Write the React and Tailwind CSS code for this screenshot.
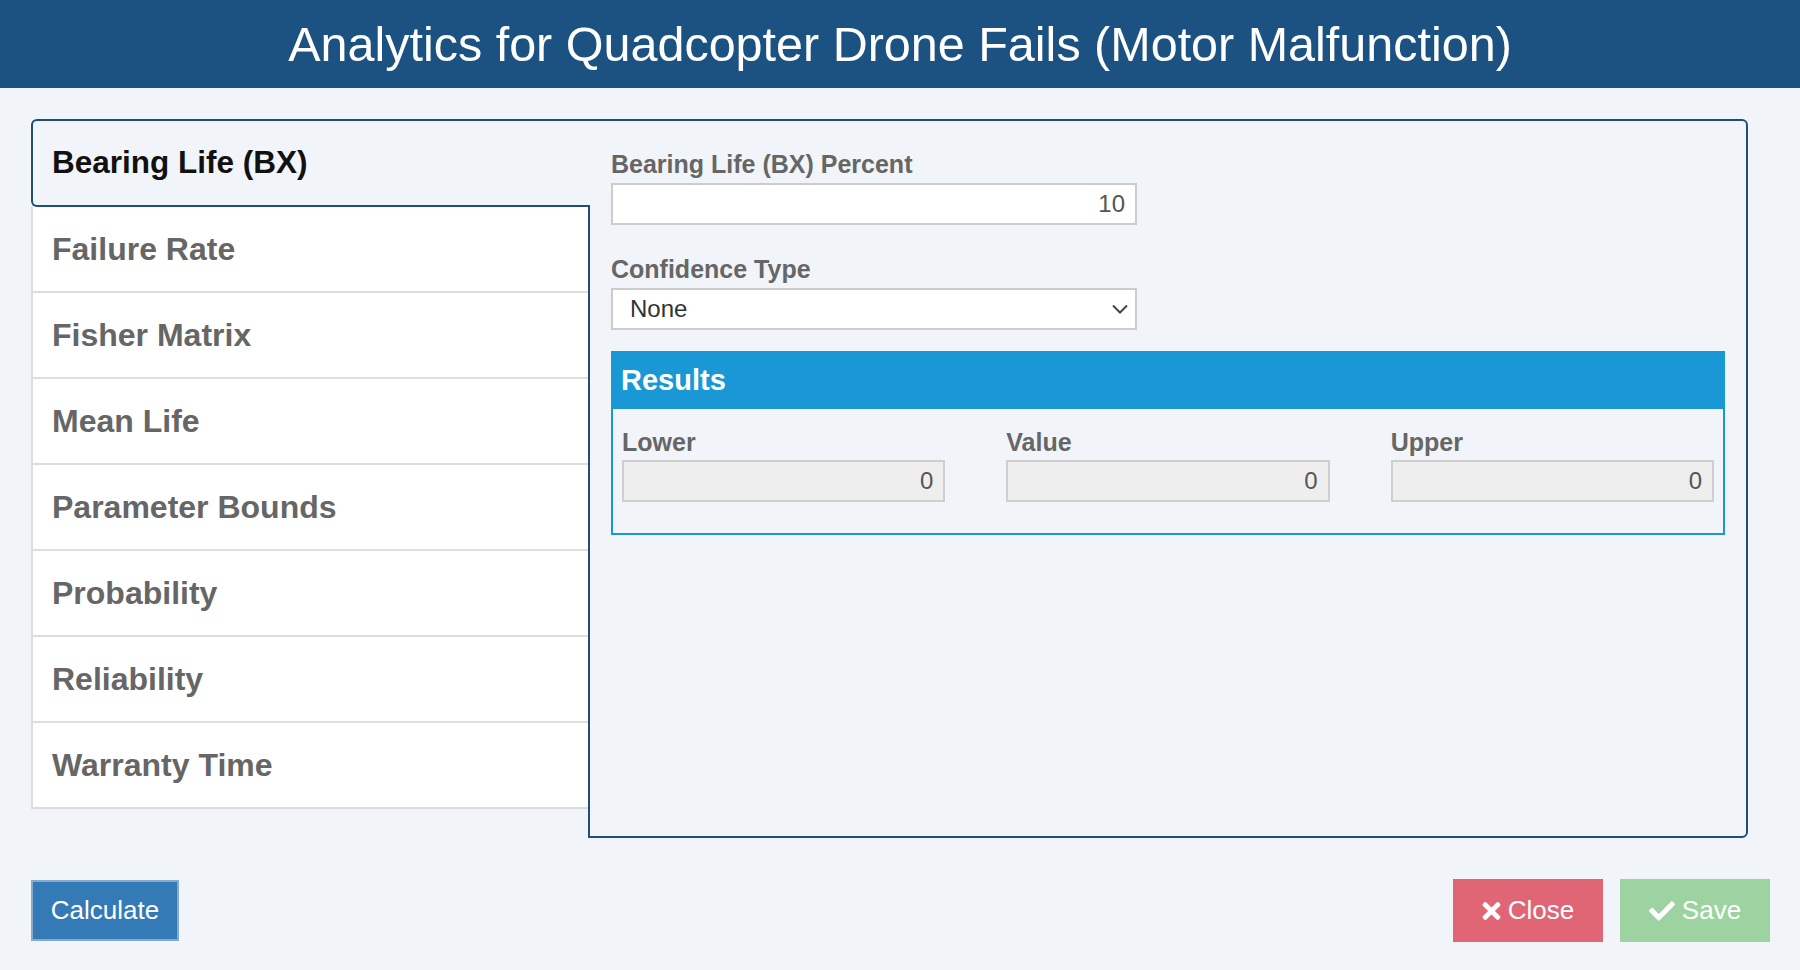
import React, { useState } from 'react';
import { FaTimes, FaCheck } from 'react-icons/fa';

const tabs = [
    'Bearing Life (BX)',
    'Failure Rate',
    'Fisher Matrix',
    'Mean Life',
    'Parameter Bounds',
    'Probability',
    'Reliability',
    'Warranty Time',
];

const ResultField = ({ label }) => (
    <div className="flex flex-col">
        <span className="text-[25px] leading-[28px] font-bold text-[#666]">{label}</span>
        <div className="mt-[4px] h-[42px] border-2 border-[#cfcfcf] bg-[#eeeeee] flex items-center justify-end pr-[10px] text-[24px] text-[#555]">
            0
        </div>
    </div>
);

const App = () => {
    const [active, setActive] = useState(0);

    return (
        <div className="w-full h-[970px] bg-[#f1f4f8] flex flex-col" style={{ fontFamily: '"Liberation Sans", Arial, sans-serif' }}>
            <div className="h-[88px] bg-[#1c5281] flex items-center justify-center text-white text-[48.5px]">
                Analytics for Quadcopter Drone Fails (Motor Malfunction)
            </div>

            <div className="pl-[31px] pr-[30px] pt-[31px] flex flex-col">
                <div className="flex mr-[22px] h-[719px]">
                    <div className="w-[557px] flex flex-col shrink-0">
                        {tabs.map((t, i) =>
                            i === active ? (
                                <button
                                    key={t}
                                    onClick={() => setActive(i)}
                                    className="relative z-10 -mr-[2px] h-[88px] flex items-center pl-[19px] bg-[#f1f4f8] border-2 border-r-0 border-[#1d4f78] rounded-l-[6px] text-left text-[31.5px] font-bold text-[#111]"
                                >
                                    {t}
                                </button>
                            ) : (
                                <button
                                    key={t}
                                    onClick={() => setActive(i)}
                                    className="h-[86px] flex items-center pl-[19px] bg-white border-l-2 border-b-2 border-[#dddddd] text-left text-[32px] font-bold text-[#666]"
                                >
                                    {t}
                                </button>
                            )
                        )}
                    </div>

                    <div className="flex-1 border-2 border-[#1d4f78] rounded-r-[6px] pl-[21px] pr-[21px] pt-[28px]">
                        <div className="text-[25px] leading-[30px] font-bold text-[#666]">Bearing Life (BX) Percent</div>
                        <div className="mt-[4px] w-[526px] h-[42px] border-2 border-[#cccccc] bg-white flex items-center justify-end pr-[10px] text-[24px] text-[#555]">
                            10
                        </div>

                        <div className="mt-[29px] text-[25px] leading-[30px] font-bold text-[#666]">Confidence Type</div>
                        <div className="mt-[4px] w-[526px] h-[42px] border-2 border-[#cccccc] bg-white flex items-center justify-between pl-[17px] pr-[6px] text-[24px] text-[#333]">
                            <span>None</span>
                            <svg width="18" height="12" viewBox="0 0 18 12" fill="none">
                                <path d="M2 2.5 L9 9.5 L16 2.5" stroke="#444" strokeWidth="2" />
                            </svg>
                        </div>

                        <div className="mt-[21px] border-2 border-[#1a98d5]">
                            <div className="h-[56px] bg-[#1a98d5] flex items-center px-[8px] text-white text-[29px] font-bold">
                                Results
                            </div>
                            <div className="grid grid-cols-3 gap-x-[61px] px-[9px] pt-[19px] pb-[31px]">
                                <ResultField label="Lower" />
                                <ResultField label="Value" />
                                <ResultField label="Upper" />
                            </div>
                        </div>
                    </div>
                </div>

                <div className="mt-[41px] flex items-center justify-between">
                    <button className="w-[148px] h-[61px] bg-[#337ab7] border-2 border-[#86a9cc] text-white text-[26px] flex items-center justify-center">
                        Calculate
                    </button>
                    <div className="flex gap-[17px]">
                        <button className="w-[150px] h-[63px] bg-[#e06676] text-white text-[26px] flex items-center justify-center gap-[7px]">
                            <FaTimes className="w-[19px] h-[26px]" />
                            <span>Close</span>
                        </button>
                        <button className="w-[150px] h-[63px] bg-[#9dd3a0] text-white text-[26px] flex items-center justify-center gap-[7px]">
                            <FaCheck className="w-[26px] h-[26px]" />
                            <span>Save</span>
                        </button>
                    </div>
                </div>
            </div>
        </div>
    );
};

export default App;
